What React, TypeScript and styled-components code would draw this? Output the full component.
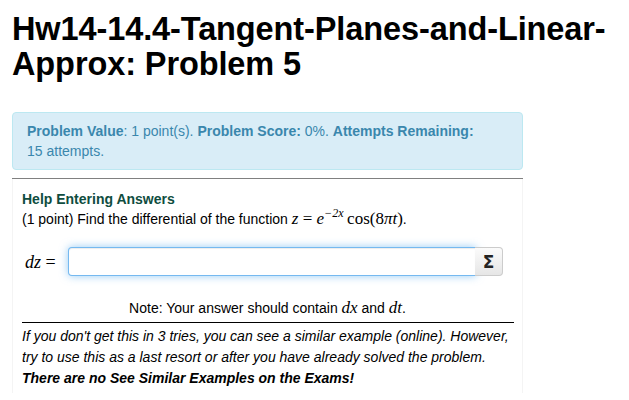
import React from "react";
import styled, { createGlobalStyle } from "styled-components";

const Global = createGlobalStyle`
  html, body { margin: 0; padding: 0; background: #fff; }
  body { font-family: "Liberation Sans", Arial, Helvetica, sans-serif; color: #000; }
`;

const Page = styled.div`
  padding: 0 12px 0 12px;
  width: 511px;
`;

const Title = styled.h1`
  margin: 0;
  padding-top: 12px;
  font-size: 32.5px;
  line-height: 35px;
  font-weight: bold;
  white-space: nowrap;
  letter-spacing: -0.1px;
`;

const Alert = styled.div`
  margin-top: 30px;
  padding: 8px 35px 8px 14px;
  background: #d9edf7;
  border: 1px solid #bce8f1;
  border-radius: 4px;
  color: #3a87ad;
  font-size: 14px;
  line-height: 20px;
`;

const Strong = styled.b`
  font-weight: bold;
`;

const GrayRule = styled.hr`
  margin: 8px 0 0;
  border: 0;
  border-top: 1px solid #808080;
  height: 0;
`;

const ProblemBody = styled.div`
  border-left: 1px solid #f4f4f4;
  border-right: 1px solid #f4f4f4;
  padding: 10px 9px 4px 9px;
  font-size: 14px;
  line-height: 20px;
`;

const HelpLink = styled.div`
  color: #0f4d40;
  font-weight: bold;
`;

const Sentence = styled.div``;

const MathSpan = styled.span`
  font-family: "Liberation Serif", "Times New Roman", serif;
  font-size: 17px;
`;

const MathOp = styled.span`
  margin: 0 0.25em;
`;

const Var = styled.i`
  font-style: italic;
`;

const Sup = styled.sup`
  font-size: 12px;
  line-height: 0;
  vertical-align: 7px;
  font-style: italic;
  margin-right: 0.3em;
`;

const AnswerRow = styled.div`
  display: flex;
  align-items: center;
  margin-top: 18px;
`;

const AnswerLabel = styled.div`
  font-family: "Liberation Serif", "Times New Roman", serif;
  font-size: 18px;
  width: 46px;
  padding-left: 3px;
  box-sizing: border-box;
`;

const InputGroup = styled.div`
  display: flex;
  height: 29px;
`;

const AnswerInput = styled.input`
  box-sizing: border-box;
  width: 408px;
  height: 29px;
  border: 1px solid rgba(82, 168, 236, 0.8);
  border-radius: 4px 0 0 4px;
  box-shadow: inset 0 1px 1px rgba(0, 0, 0, 0.075), 0 0 8px rgba(82, 168, 236, 0.6);
  outline: none;
  padding: 4px 6px;
  font-size: 14px;
  background: #fff;
`;

const SigmaButton = styled.button`
  box-sizing: border-box;
  width: 28px;
  height: 29px;
  margin-left: -1px;
  border: 1px solid #ccc;
  border-left: 0;
  border-radius: 0 4px 4px 0;
  background: linear-gradient(#fbfbfb, #e6e6e6);
  font-family: "DejaVu Sans", "Liberation Sans", sans-serif;
  font-weight: bold;
  font-size: 17px;
  color: #222;
  padding: 0;
`;

const Note = styled.div`
  text-align: center;
  margin-top: 22px;
`;

const BlackRule = styled.hr`
  margin: 4px 0 0;
  width: 492px;
  border: 0;
  border-top: 1px solid #000;
  height: 0;
`;

const Hint = styled.div`
  font-style: italic;
  margin-top: 3px;
  line-height: 21px;
`;

export default function App() {
  return (
    <>
      <Global />
      <Page>
        <Title>
          Hw14-14.4-Tangent-Planes-and-Linear-
          <br />
          Approx: Problem 5
        </Title>
        <Alert>
          <Strong>Problem Value</Strong>: 1 point(s). <Strong>Problem Score:</Strong> 0%.{" "}
          <Strong>Attempts Remaining:</Strong> 15 attempts.
        </Alert>
        <GrayRule />
        <ProblemBody>
          <HelpLink>Help Entering Answers</HelpLink>
          <Sentence>
            (1 point) Find the differential of the function{" "}
            <MathSpan>
              <Var>z</Var>
              <MathOp>=</MathOp>
              <Var>e</Var>
              <Sup>−2x</Sup>cos(8<Var>πt</Var>)
            </MathSpan>
            .
          </Sentence>
          <AnswerRow>
            <AnswerLabel>
              <Var>dz</Var>
              <MathOp>=</MathOp>
            </AnswerLabel>
            <InputGroup>
              <AnswerInput type="text" />
              <SigmaButton>Σ</SigmaButton>
            </InputGroup>
          </AnswerRow>
          <Note>
            Note: Your answer should contain{" "}
            <MathSpan>
              <Var>dx</Var>
            </MathSpan>{" "}
            and{" "}
            <MathSpan>
              <Var>dt</Var>
            </MathSpan>
            .
          </Note>
          <BlackRule />
          <Hint>
            If you don't get this in 3 tries, you can see a similar example (online). However, try to use this
            as a last resort or after you have already solved the problem.
            <br />
            <Strong>There are no See Similar Examples on the Exams!</Strong>
          </Hint>
        </ProblemBody>
      </Page>
    </>
  );
}
